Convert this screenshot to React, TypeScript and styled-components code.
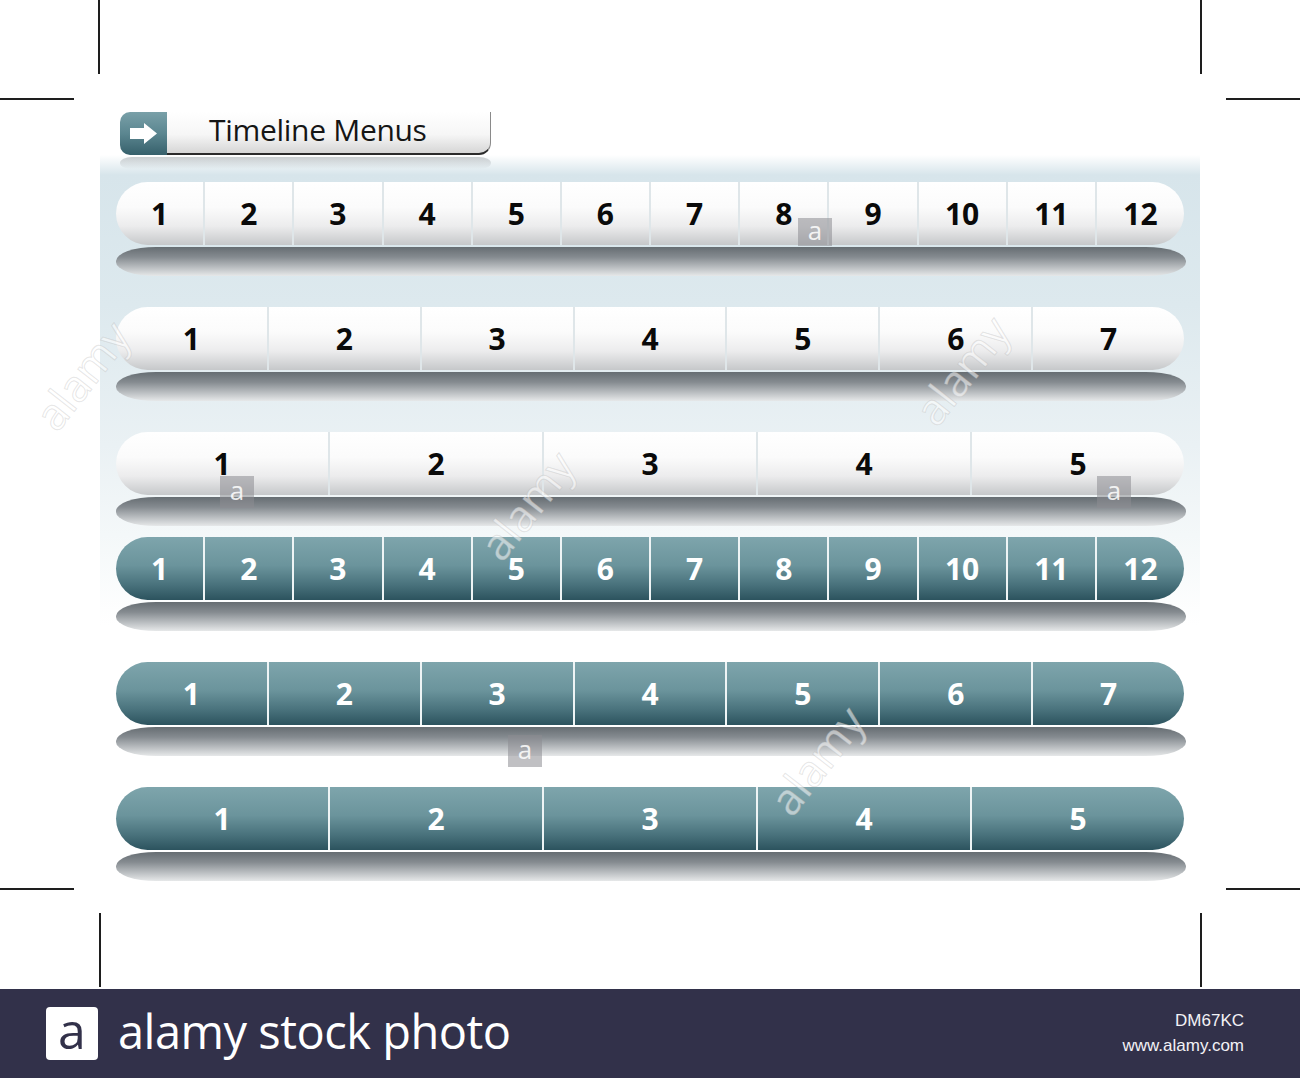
import React from 'react';
import styled, { createGlobalStyle } from 'styled-components';

const GlobalStyle = createGlobalStyle`
  html, body {
    margin: 0;
    padding: 0;
    background: #ffffff;
  }
  body {
    font-family: 'Open Sans', 'Liberation Sans', sans-serif;
  }
`;

type Tone = 'light' | 'teal';

const MENUS: { tone: Tone; count: number }[] = [
  { tone: 'light', count: 12 },
  { tone: 'light', count: 7 },
  { tone: 'light', count: 5 },
  { tone: 'teal', count: 12 },
  { tone: 'teal', count: 7 },
  { tone: 'teal', count: 5 },
];

const WATERMARKS = [
  { x: 798, y: 218, w: 34, h: 28 },
  { x: 220, y: 476, w: 34, h: 32 },
  { x: 1097, y: 476, w: 34, h: 32 },
  { x: 508, y: 735, w: 34, h: 32 },
];

const WORDMARKS = [
  { x: 20, y: 345, r: -52 },
  { x: 900, y: 340, r: -52 },
  { x: 465, y: 475, r: -52 },
  { x: 755, y: 730, r: -52 },
];

const Arrow = () => (
  <svg width="27" height="21" viewBox="0 0 27 21">
    <path d="M0 5 H14 V0 L27 10.5 L14 21 V16 H0 Z" fill="#ffffff" />
  </svg>
);

const TimelineBar = ({ tone, count }: { tone: Tone; count: number }) => (
  <Row>
    <Bar $tone={tone}>
      {Array.from({ length: count }, (_, i) => (
        <Segment key={i} $tone={tone} $first={i === 0}>
          {i + 1}
        </Segment>
      ))}
    </Bar>
    <Reflection />
  </Row>
);

export default function App() {
  const light = MENUS.filter((m) => m.tone === 'light');
  const teal = MENUS.filter((m) => m.tone === 'teal');
  return (
    <Page>
      <GlobalStyle />
      <Stage>
        <Mark $v style={{ left: 98, top: 0 }} />
        <Mark style={{ left: 0, top: 98 }} />
        <Mark $v style={{ left: 1200, top: 0 }} />
        <Mark style={{ left: 1226, top: 98 }} />
        <Mark $v style={{ left: 99, top: 913 }} />
        <Mark style={{ left: 0, top: 888 }} />
        <Mark $v style={{ left: 1200, top: 913 }} />
        <Mark style={{ left: 1226, top: 888 }} />

        <Header>
          <HeaderIcon>
            <Arrow />
          </HeaderIcon>
          <HeaderTitle>Timeline Menus</HeaderTitle>
        </Header>
        <Panel>
          <HeaderReflection />
          <Group>
            {light.map((m, i) => (
              <TimelineBar key={i} {...m} />
            ))}
          </Group>
          <Group $spaced>
            {teal.map((m, i) => (
              <TimelineBar key={i} {...m} />
            ))}
          </Group>
        </Panel>

        {WORDMARKS.map((w, i) => (
          <Wordmark key={i} style={{ left: w.x, top: w.y, transform: `rotate(${w.r}deg)` }}>
            alamy
          </Wordmark>
        ))}
        {WATERMARKS.map((w, i) => (
          <Stamp key={i} style={{ left: w.x, top: w.y, width: w.w, height: w.h }}>
            a
          </Stamp>
        ))}
      </Stage>
      <Banner>
        <Logo>a</Logo>
        <Brand>alamy stock photo</Brand>
        <Meta>
          <span>DM67KC</span>
          <span>www.alamy.com</span>
        </Meta>
      </Banner>
    </Page>
  );
}

const Page = styled.div`
  width: 1300px;
  height: 1078px;
  display: flex;
  flex-direction: column;
  overflow: hidden;
`;
const Stage = styled.div`
  position: relative;
  height: 989px;
  padding: 112px 100px 0;
  box-sizing: border-box;
`;
const Mark = styled.div<{ $v?: boolean }>`
  position: absolute;
  background: #1e1e1e;
  width: ${(p) => (p.$v ? '1.5px' : '74px')};
  height: ${(p) => (p.$v ? '74px' : '1.5px')};
`;
const Header = styled.div`
  display: flex;
  width: 371px;
  height: 43px;
  margin-left: 20px;
  position: relative;
  z-index: 1;
`;
const HeaderIcon = styled.div`
  width: 47px;
  display: flex;
  align-items: center;
  justify-content: center;
  border-radius: 10px 0 0 10px;
  background: linear-gradient(to bottom, #79a0a8 0%, #5b8690 50%, #36606b 100%);
`;
const HeaderTitle = styled.div`
  flex: 1;
  display: flex;
  align-items: center;
  padding: 0 0 6px 42px;
  font-size: 30px;
  letter-spacing: -0.3px;
  color: #151515;
  border-bottom: 2px solid #2b2b2b;
  border-right: 1px solid #8a8a8a;
  border-bottom-right-radius: 12px;
  background: linear-gradient(to bottom, #ffffff 0%, #f6f6f6 55%, #d6d6d6 100%);
`;
const Panel = styled.div`
  display: flex;
  flex-direction: column;
  padding: 0 16px 20px;
  background: linear-gradient(
    to bottom,
    #ffffff 0px,
    #d7e5eb 20px,
    #dde9ee 150px,
    #eaf1f4 290px,
    #f4f8f9 380px,
    #ffffff 470px
  );
`;
const HeaderReflection = styled.div`
  width: 371px;
  height: 12px;
  margin: 2px 0 13px 4px;
  border-radius: 12px / 6px;
  background: linear-gradient(to bottom, rgba(110, 120, 126, 0.35), rgba(255, 255, 255, 0));
`;
const Group = styled.div<{ $spaced?: boolean }>`
  display: flex;
  flex-direction: column;
  gap: 31px;
  margin-top: ${(p) => (p.$spaced ? '11px' : '0')};
`;
const Row = styled.div`
  display: flex;
  flex-direction: column;
  gap: 2px;
`;
const Bar = styled.div<{ $tone: Tone }>`
  display: flex;
  height: 63px;
  border-radius: 32px;
  overflow: hidden;
  background: ${(p) =>
    p.$tone === 'teal'
      ? 'linear-gradient(to bottom, #7ea5ac 0%, #6b949c 45%, #4a737d 75%, #2c535e 100%)'
      : 'linear-gradient(to bottom, #ffffff 0%, #fbfbfb 40%, #ececed 70%, #c6c8ca 100%)'};
`;
const Segment = styled.div<{ $tone: Tone; $first: boolean }>`
  flex: 1;
  display: flex;
  align-items: center;
  justify-content: center;
  font-size: 30px;
  font-weight: 700;
  color: ${(p) => (p.$tone === 'teal' ? '#ffffff' : '#0a0a0a')};
  border-left: ${(p) =>
    p.$first ? 'none' : p.$tone === 'teal' ? '2px solid #eef4f5' : '2px solid #dfe6e9'};
`;
const Reflection = styled.div`
  height: 29px;
  margin-right: -2px;
  border-radius: 40px / 14px;
  background: linear-gradient(to bottom, #666d72 0%, #858b90 35%, #b9bdc0 70%, #e6e8e9 100%);
`;
const Stamp = styled.div`
  position: absolute;
  display: flex;
  align-items: center;
  justify-content: center;
  background: rgba(140, 140, 145, 0.55);
  color: rgba(255, 255, 255, 0.85);
  font-size: 26px;
  line-height: 1;
  padding-bottom: 4px;
  box-sizing: border-box;
`;
const Wordmark = styled.div`
  position: absolute;
  font-size: 44px;
  color: rgba(255, 255, 255, 0.55);
  -webkit-text-stroke: 1px rgba(170, 170, 170, 0.3);
  pointer-events: none;
`;
const Banner = styled.div`
  height: 89px;
  display: flex;
  align-items: center;
  padding: 0 56px 0 46px;
  background: #32314a;
  color: #ffffff;
`;
const Logo = styled.div`
  width: 52px;
  height: 53px;
  border-radius: 4px;
  background: #ffffff;
  color: #32314a;
  display: flex;
  align-items: center;
  justify-content: center;
  font-size: 50px;
  line-height: 1;
  padding-bottom: 8px;
  box-sizing: border-box;
`;
const Brand = styled.div`
  margin-left: 20px;
  font-size: 47px;
  letter-spacing: -0.5px;
  padding-bottom: 6px;
`;
const Meta = styled.div`
  margin-left: auto;
  display: flex;
  flex-direction: column;
  align-items: flex-end;
  gap: 5px;
  font-family: 'Liberation Sans', sans-serif;
  font-size: 17px;
  color: #f2f2f6;
`;
